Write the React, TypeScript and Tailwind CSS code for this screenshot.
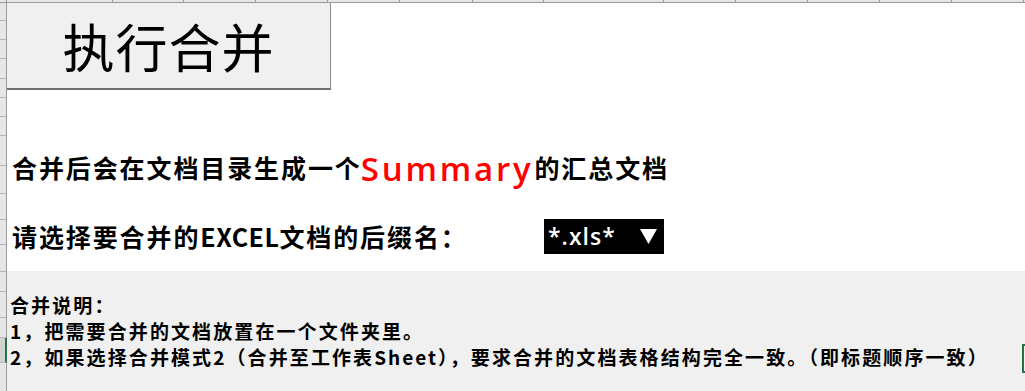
import React from "react";

const colCells = [
  "w-[106px]",
  "w-[71px]",
  "w-[72px]",
  "w-[72px]",
  "w-[72px]",
  "w-[73px]",
  "w-[71px]",
  "w-[120px]",
  "w-[72px]",
  "w-[72px]",
  "w-[72px]",
  "w-[72px]",
  "w-[72px]",
];

const rowCells = [
  "h-[18px]",
  "h-[19px]",
  "h-[19px]",
  "h-[20px]",
  "h-[19px]",
  "h-[19px]",
  "h-[19px]",
  "h-[30px]",
  "h-[28px]",
  "h-[26px]",
  "h-[25px]",
  "h-[27px]",
  "h-[20px]",
  "h-[26px]",
  "h-[20px]",
];

export default function App() {
  return (
    <div className="relative w-[1025px] h-[391px] overflow-hidden bg-white font-['Noto_Sans_CJK_SC',sans-serif] text-black">
      {/* column header strip */}
      <div className="flex h-[3px] bg-[#e6e6e6] border-b border-[#9b9b9b]">
        <div className="w-[7px] shrink-0 border-r border-[#9b9b9b]" />
        {colCells.map((c, i) => (
          <div key={i} className={`${c} shrink-0 border-r border-[#9b9b9b]`} />
        ))}
      </div>

      <div className="flex h-[388px]">
        {/* row header */}
        <div className="w-[7px] shrink-0 flex flex-col bg-[#e6e6e6] border-r border-[#9b9b9b]">
          {rowCells.map((c, i) => (
            <div key={i} className={`${c} shrink-0 border-b border-[#b5b5b5]`} />
          ))}
          <div className="h-[25px] shrink-0 bg-[#d2d2d2] border-r-2 border-[#217346] border-b border-b-[#b5b5b5] -mr-px" />
          <div className="flex-1" />
        </div>

        {/* sheet content */}
        <div className="flex-1 flex flex-col">
          {/* button */}
          <div className="w-[324px] h-[87px] shrink-0 bg-[#f0f0f0] border-r border-[#8a8a8a] border-b-2 border-b-[#6f6f6f] flex items-center justify-center">
            <span className="text-[52px] leading-none tracking-[1px] font-normal">执行合并</span>
          </div>

          {/* white area */}
          <div className="h-[181px] shrink-0 flex flex-col pl-[5px]">
            <div className="mt-[58px] h-[38px] flex items-end text-[25px] font-bold tracking-[1.9px] leading-[38px] whitespace-nowrap">
              <span>合并后会在文档目录生成一个</span>
              <span className="font-['Open_Sans',sans-serif] font-semibold text-[33px] tracking-[2.8px] text-[#ff0000] leading-[38px] -ml-[1px] mr-[1px] relative top-[2px]">
                Summary
              </span>
              <span>的汇总文档</span>
            </div>
            <div className="mt-[33px] h-[35px] flex items-center whitespace-nowrap">
              <span className="w-[532px] shrink-0 text-[25px] font-bold tracking-[1.9px] leading-[35px]">
                请选择要合并的<span className="tracking-[0.5px]">EXCEL</span>文档的后缀名：
              </span>
              <div className="w-[120px] h-[35px] bg-black flex items-center pl-[4px] pr-[7px]">
                <span className="flex-1 text-white font-['Open_Sans',sans-serif] font-semibold text-[23px] tracking-[1px] leading-none">
                  *.xls*
                </span>
                <svg width="17" height="15" viewBox="0 0 17 15" className="block">
                  <polygon points="0,0 17,0 8.5,15" fill="white" />
                </svg>
              </div>
            </div>
          </div>

          {/* gray area */}
          <div className="relative flex-1 bg-[#f0f0f0] pl-[3px] pt-[21px]">
            <div className="text-[19px] font-bold tracking-[2.1px] leading-[26px] whitespace-nowrap">
              <div>合并说明：</div>
              <div>1，把需要合并的文档放置在一个文件夹里。</div>
              <div>
                2，如果选择合并模式2（合并至工作表<span className="tracking-[2px]">Sheet</span>），要求合并的文档表格结构完全一致。（即标题顺序一致）
              </div>
            </div>
            <div className="absolute right-0 top-[73px] w-[3px] h-[29px] border-l-2 border-t-2 border-b-2 border-[#217346]" />
          </div>
        </div>
      </div>
    </div>
  );
}
